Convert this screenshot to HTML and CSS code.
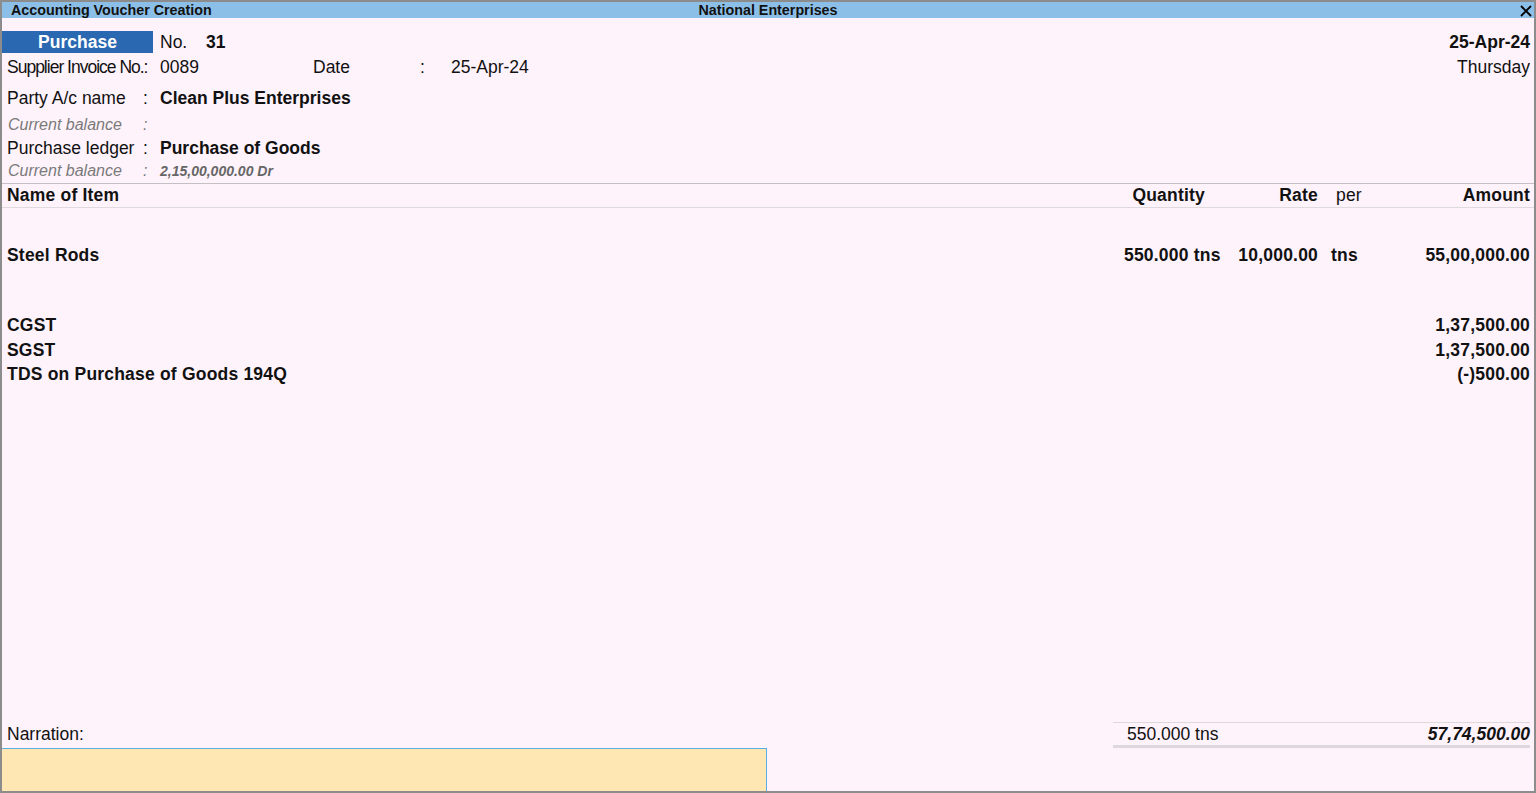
FILE: index.html
```html
<!DOCTYPE html>
<html>
<head>
<meta charset="UTF-8">
<title>Accounting Voucher Creation</title>
<link rel="stylesheet" href="styles.css">
</head>
<body>
<div class="window">
    <div class="titlebar">
        <span class="title-left">Accounting Voucher Creation</span>
        <span class="title-center">National Enterprises</span>
        <span class="title-right">
            <svg class="close" width="12" height="12" viewBox="0 0 12 12">
                <path d="M1 1 L11 11 M11 1 L1 11" stroke="#000" stroke-width="1.8" fill="none"/>
            </svg>
        </span>
    </div>

    <div class="voucher">
        <div class="head">
            <div class="head-left">
                <div class="row">
                    <span class="vtype">Purchase</span>
                    <span class="no-label">No.</span>
                    <span class="bold">31</span>
                </div>
                <div class="row row-inv">
                    <span class="inv-label">Supplier Invoice No.:</span>
                    <span class="inv-val">0089</span>
                    <span class="date-label">Date</span>
                    <span class="date-colon">:</span>
                    <span>25-Apr-24</span>
                </div>
            </div>
            <div class="head-right">
                <div class="row bold">25-Apr-24</div>
                <div class="row row-inv">Thursday</div>
            </div>
        </div>

        <div class="field field-party">
            <span class="f-label">Party A/c name</span>
            <span class="f-colon">:</span>
            <span class="bold">Clean Plus Enterprises</span>
        </div>
        <div class="balance balance-1">
            <span class="f-label">Current balance</span>
            <span class="f-colon">:</span>
            <span class="bal-val"></span>
        </div>
        <div class="field field-ledger">
            <span class="f-label">Purchase ledger</span>
            <span class="f-colon">:</span>
            <span class="bold">Purchase of Goods</span>
        </div>
        <div class="balance balance-2">
            <span class="f-label">Current balance</span>
            <span class="f-colon">:</span>
            <span class="bal-val">2,15,00,000.00 Dr</span>
        </div>

        <div class="grid grid-head">
            <span>Name of Item</span>
            <span class="qty qty-head">Quantity</span>
            <span class="rate">Rate</span>
            <span class="per per-head">per</span>
            <span class="amt">Amount</span>
        </div>

        <div class="grid item">
            <span>Steel Rods</span>
            <span class="qty">550.000 tns</span>
            <span class="rate">10,000.00</span>
            <span class="per">tns</span>
            <span class="amt">55,00,000.00</span>
        </div>

        <div class="ledger-rows">
            <div class="grid tax">
                <span>CGST</span><span></span><span></span><span></span>
                <span class="amt">1,37,500.00</span>
            </div>
            <div class="grid tax">
                <span>SGST</span><span></span><span></span><span></span>
                <span class="amt">1,37,500.00</span>
            </div>
            <div class="grid tax">
                <span>TDS on Purchase of Goods 194Q</span><span></span><span></span><span></span>
                <span class="amt">(-)500.00</span>
            </div>
        </div>

        <div class="spacer"></div>

        <div class="footer">
            <span class="narr-label">Narration:</span>
            <div class="totals">
                <span>550.000 tns</span>
                <span class="total-amt">57,74,500.00</span>
            </div>
        </div>
        <div class="narration-box"></div>
    </div>
</div>
</body>
</html>
```

FILE: styles.css
```css
html, body {
    margin: 0;
    padding: 0;
}

body {
    font-family: "Liberation Sans", Arial, sans-serif;
    font-size: 17.5px;
    color: #111;
    background: #fef3fb;
}

.window {
    box-sizing: border-box;
    width: 1536px;
    height: 793px;
    border: 2px solid #8c8c8c;
    display: flex;
    flex-direction: column;
    background: #fef3fb;
}

.titlebar {
    height: 16px;
    background: #8cbfe7;
    display: grid;
    grid-template-columns: 1fr auto 1fr;
    align-items: center;
    font-size: 14.3px;
    font-weight: bold;
    line-height: 16px;
}

.title-left {
    padding-left: 9px;
}

.title-right {
    display: flex;
    justify-content: flex-end;
    padding-right: 2px;
}

.close {
    display: block;
    margin-top: 2px;
}

.voucher {
    flex: 1;
    display: flex;
    flex-direction: column;
}

.bold {
    font-weight: bold;
}

/* header */
.head {
    display: flex;
    justify-content: space-between;
    padding-top: 13px;
}

.row {
    height: 22px;
    line-height: 22px;
    display: flex;
}

.row-inv {
    margin-top: 2px;
    padding-top: 1px;
    height: 21px;
}

.vtype {
    width: 151px;
    background: #2b68b2;
    color: #fff;
    font-weight: bold;
    text-align: center;
}

.no-label {
    width: 46px;
    margin-left: 7px;
}

.inv-label {
    width: 158px;
    padding-left: 5px;
    box-sizing: border-box;
    letter-spacing: -1px;
}

.inv-val {
    width: 153px;
}

.date-label {
    width: 107px;
}

.date-colon {
    width: 31px;
}

.head-right {
    padding-right: 4px;
    text-align: right;
}

.head-right .row {
    justify-content: flex-end;
}

/* ledger fields */
.field {
    height: 21px;
    padding-top: 1px;
    line-height: 22px;
    display: flex;
    padding-left: 5px;
}

.field-party {
    margin-top: 9px;
}

.field-ledger {
    margin-top: 2px;
}

.f-label {
    width: 136px;
}

.f-colon {
    width: 17px;
}

.balance {
    height: 19px;
    padding-top: 1px;
    line-height: 20px;
    display: flex;
    padding-left: 6px;
    font-size: 16px;
    font-style: italic;
    color: #7a7a7a;
}

.balance .f-label {
    width: 135px;
}

.balance-1 {
    margin-top: 6px;
}

.balance-2 {
    margin-top: 2px;
}

.bal-val {
    font-size: 14px;
    font-weight: bold;
    color: #666;
}

/* item table */
.grid {
    display: grid;
    grid-template-columns: 1fr 96px 98px 82px 130px;
    padding: 0 4px 0 5px;
    font-weight: bold;
    letter-spacing: 0.2px;
    white-space: nowrap;
}

.grid-head {
    margin-top: 3px;
    height: 23px;
    line-height: 23px;
    border-top: 1px solid #c4c0c4;
    border-bottom: 1px solid #dedade;
}

.qty {
    text-align: right;
    padding-right: 1px;
}

.qty-head {
    padding-right: 15px;
}

.rate {
    text-align: right;
}

.per {
    padding-left: 13px;
}

.per-head {
    padding-left: 18px;
    font-weight: normal;
}

.amt {
    text-align: right;
}

.item {
    margin-top: 35px;
    height: 24px;
    line-height: 24px;
}

.ledger-rows {
    margin-top: 46px;
}

.tax {
    height: 24.5px;
    line-height: 24.5px;
}

.spacer {
    flex: 1;
}

/* footer */
.footer {
    display: flex;
    justify-content: space-between;
    align-items: flex-start;
}

.narr-label {
    padding-left: 5px;
    margin-top: 1px;
    line-height: 22px;
}

.totals {
    width: 417px;
    margin-right: 4px;
    box-sizing: border-box;
    display: flex;
    justify-content: space-between;
    padding-left: 14px;
    height: 26px;
    line-height: 22px;
    border-top: 1px solid #dcd8dc;
    border-bottom: 3px solid #dcd8dc;
}

.total-amt {
    font-weight: bold;
    font-style: italic;
}

.narration-box {
    width: 765px;
    height: 43px;
    box-sizing: border-box;
    background: #ffe7b3;
    border-top: 1px solid #5aaee2;
    border-right: 1px solid #5aaee2;
}
```
